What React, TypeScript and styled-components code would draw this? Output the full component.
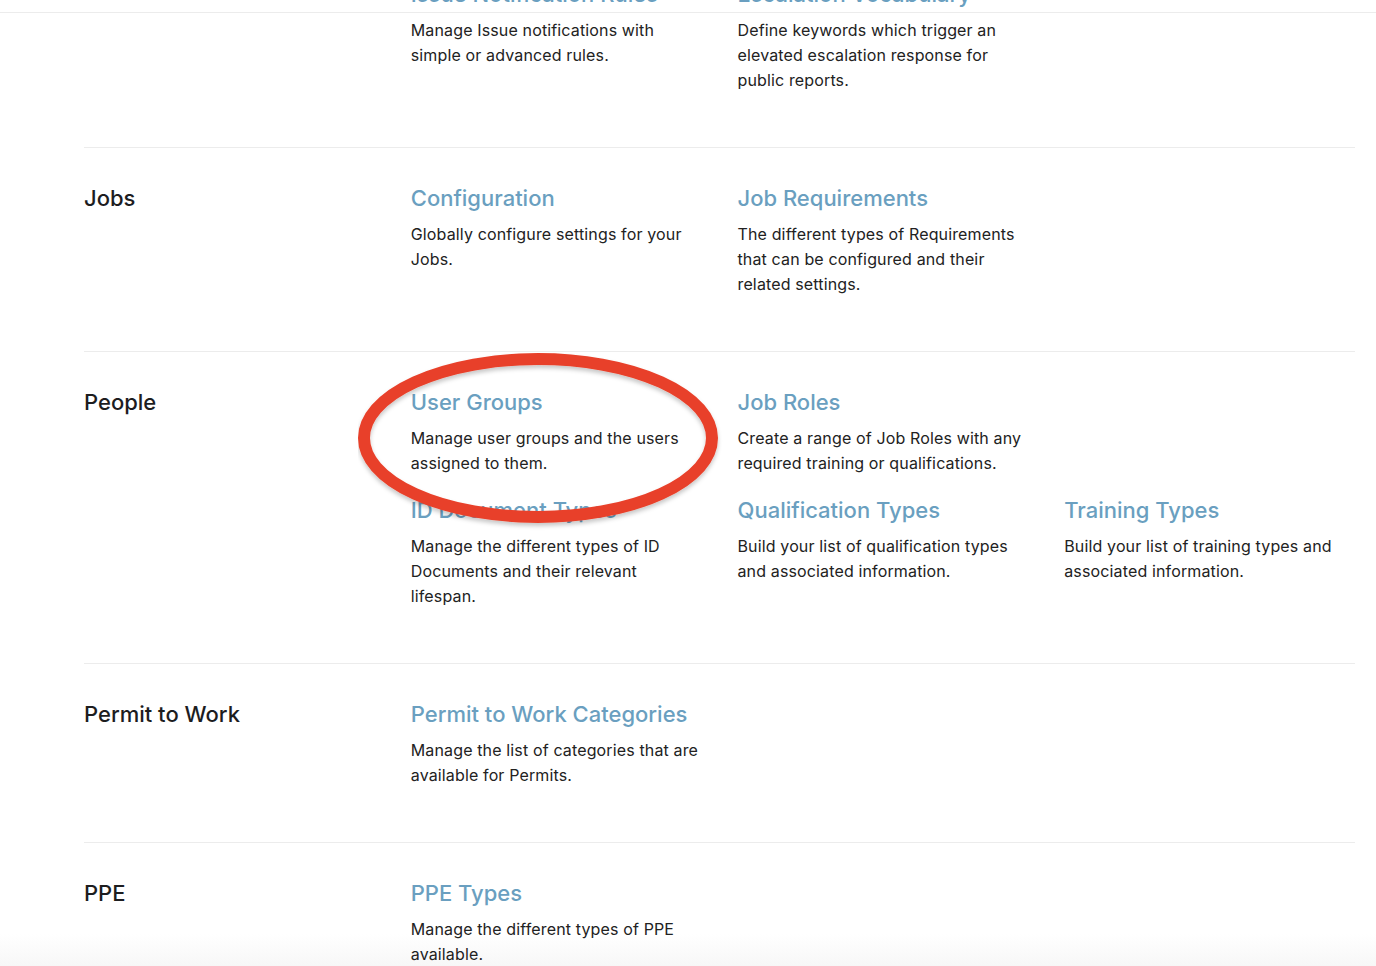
import styled, { createGlobalStyle } from "styled-components";

interface SettingItem {
  title: string;
  text: string;
  circled?: boolean;
}

interface SettingGroup {
  label: string;
  items: SettingItem[];
}

const groups: SettingGroup[] = [
  {
    label: "Issues",
    items: [
      {
        title: "Issue Categories",
        text: "Organise Issues into categories for easier reporting.",
      },
      {
        title: "Issue Priorities",
        text: "Configure the priority levels available for Issues.",
      },
      {
        title: "Issue Statuses",
        text: "Define the statuses an Issue can move through.",
      },
      {
        title: "Issue Notification Rules",
        text: "Manage Issue notifications with simple or advanced rules.",
      },
      {
        title: "Escalation Vocabulary",
        text: "Define keywords which trigger an elevated escalation response for public reports.",
      },
    ],
  },
  {
    label: "Jobs",
    items: [
      { title: "Configuration", text: "Globally configure settings for your Jobs." },
      {
        title: "Job Requirements",
        text: "The different types of Requirements that can be configured and their related settings.",
      },
    ],
  },
  {
    label: "People",
    items: [
      {
        title: "User Groups",
        text: "Manage user groups and the users assigned to them.",
        circled: true,
      },
      {
        title: "Job Roles",
        text: "Create a range of Job Roles with any required training or qualifications.",
      },
      { title: "", text: "" },
      {
        title: "ID Document Types",
        text: "Manage the different types of ID Documents and their relevant lifespan.",
      },
      {
        title: "Qualification Types",
        text: "Build your list of qualification types and associated information.",
      },
      {
        title: "Training Types",
        text: "Build your list of training types and associated information.",
      },
    ],
  },
  {
    label: "Permit to Work",
    items: [
      {
        title: "Permit to Work Categories",
        text: "Manage the list of categories that are available for Permits.",
      },
    ],
  },
  {
    label: "PPE",
    items: [
      { title: "PPE Types", text: "Manage the different types of PPE available." },
    ],
  },
];

function Circle() {
  return (
    <Annotation width="374" height="184" viewBox="0 0 374 184">
      <defs>
        <filter id="soft" x="-10%" y="-10%" width="120%" height="130%">
          <feDropShadow dx="0" dy="3" stdDeviation="2" floodColor="#000" floodOpacity="0.22" />
        </filter>
      </defs>
      <ellipse
        cx="180"
        cy="85"
        rx="174"
        ry="79"
        fill="none"
        stroke="#e8412a"
        strokeWidth="12"
        filter="url(#soft)"
      />
    </Annotation>
  );
}

export default function App() {
  return (
    <>
      <GlobalStyle />
      <Page>
        <TopRule />
        <Content>
          {groups.map((group, i) => (
            <Row key={group.label} $first={i === 0}>
              <Label>{group.label}</Label>
              <Items>
                {group.items.map((item, j) =>
                  item.title ? (
                    <Item key={j}>
                      <Title href="#">{item.title}</Title>
                      <Text>{item.text}</Text>
                      {item.circled && <Circle />}
                    </Item>
                  ) : (
                    <div key={j} />
                  )
                )}
              </Items>
            </Row>
          ))}
        </Content>
      </Page>
    </>
  );
}

const GlobalStyle = createGlobalStyle`
  body {
    margin: 0;
    background: #fff;
    font-family: Inter, "Noto Sans", "Liberation Sans", sans-serif;
    -webkit-font-smoothing: antialiased;
  }
`;

const Page = styled.div`
  position: relative;
  height: 100vh;
  overflow: hidden;
  background: linear-gradient(#fff calc(100% - 32px), #f7f7f7);
`;

const TopRule = styled.div`
  position: absolute;
  top: 12px;
  left: 0;
  right: 0;
  height: 1px;
  background: #ececec;
  z-index: 2;
`;

const Content = styled.div`
  margin: -165px 21px 0 84px;
`;

const Row = styled.section<{ $first?: boolean }>`
  display: grid;
  grid-template-columns: repeat(4, 1fr);
  column-gap: 36px;
  padding: 36px 0 54px;
  border-top: 1px solid ${(p) => (p.$first ? "transparent" : "#ececec")};
`;

const Label = styled.h2`
  margin: 0;
  font-size: 22px;
  line-height: 28px;
  font-weight: 500;
  color: #1d1d1f;
`;

const Items = styled.div`
  grid-column: 2 / -1;
  display: grid;
  grid-template-columns: repeat(3, 1fr);
  column-gap: 36px;
  row-gap: 20px;
`;

const Item = styled.div`
  position: relative;
`;

const Title = styled.a`
  display: block;
  font-size: 22px;
  line-height: 28px;
  font-weight: 500;
  color: #6a9fc0;
  text-decoration: none;
`;

const Text = styled.p`
  margin: 10px 0 0;
  font-size: 16px;
  line-height: 25px;
  letter-spacing: 0.14px;
  color: #222;
`;

const Annotation = styled.svg`
  position: absolute;
  left: -53px;
  top: -35px;
  pointer-events: none;
  z-index: 3;
`;
